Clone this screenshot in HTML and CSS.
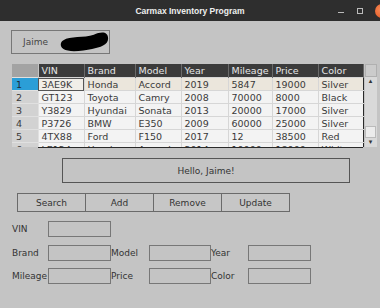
FILE: index.html
```html
<!DOCTYPE html>
<html lang="en">
<head>
<meta charset="UTF-8">
<title>Carmax Inventory Program</title>
<link rel="stylesheet" href="styles.css">
</head>
<body>
<div class="titlebar">
    <span></span>
    <span class="title">Carmax Inventory Program</span>
    <span class="winbtns">
        <span class="min"></span>
        <span class="max"></span>
        <span class="close"></span>
    </span>
</div>

<div class="namebox">
    <span>Jaime</span>
    <svg class="scribble" width="56" height="25" viewBox="0 0 56 25">
        <path d="M5 11 C12 6 28 9 39 5 C47 1 55 1 55 9 C55 17 46 19 37 21 C27 23 11 25 5 21 C1 18 1 13 5 11 Z" fill="#000"/>
    </svg>
</div>

<div class="gridwrap">
    <div class="tablebox">
        <table class="inv">
            <colgroup>
                <col style="width:26px"><col style="width:46px"><col style="width:51px"><col style="width:46px">
                <col style="width:47px"><col style="width:44px"><col style="width:46px"><col style="width:45px">
            </colgroup>
            <thead>
                <tr><th class="corner"></th><th>VIN</th><th>Brand</th><th>Model</th><th>Year</th><th>Mileage</th><th>Price</th><th>Color</th></tr>
            </thead>
            <tbody>
                <tr class="sel"><td class="rh">1</td><td class="focus">3AE9K</td><td>Honda</td><td>Accord</td><td>2019</td><td>5847</td><td>19000</td><td>Silver</td></tr>
                <tr><td class="rh">2</td><td>GT123</td><td>Toyota</td><td>Camry</td><td>2008</td><td>70000</td><td>8000</td><td>Black</td></tr>
                <tr><td class="rh">3</td><td>Y3829</td><td>Hyundai</td><td>Sonata</td><td>2013</td><td>20000</td><td>17000</td><td>Silver</td></tr>
                <tr><td class="rh">4</td><td>P3726</td><td>BMW</td><td>E350</td><td>2009</td><td>60000</td><td>25000</td><td>Silver</td></tr>
                <tr><td class="rh">5</td><td>4TX88</td><td>Ford</td><td>F150</td><td>2017</td><td>12</td><td>38500</td><td>Red</td></tr>
                <tr><td class="rh">6</td><td>LE124</td><td>Honda</td><td>Accord</td><td>2014</td><td>10000</td><td>18000</td><td>White</td></tr>
            </tbody>
        </table>
        <div class="scrollbar">
            <div class="sb-head"></div>
            <div class="sb-track">
                <span class="arrow">&#9652;</span>
                <span class="thumb"></span>
                <span class="arrow">&#9662;</span>
            </div>
        </div>
    </div>
    <div class="tableedge"></div>
</div>

<div class="hello">Hello, Jaime!</div>

<div class="buttons">
    <button>Search</button>
    <button>Add</button>
    <button>Remove</button>
    <button>Update</button>
</div>

<form class="fields">
    <label>VIN</label><input type="text">
    <span></span><span></span><span></span><span></span>
    <label>Brand</label><input type="text">
    <label>Model</label><input type="text">
    <label>Year</label><input type="text">
    <label>Mileage</label><input type="text">
    <label>Price</label><input type="text">
    <label>Color</label><input type="text">
</form>
</body>
</html>
```

FILE: styles.css
```css
body {
    margin: 0;
    width: 380px;
    height: 308px;
    overflow: hidden;
    background-color: #c4c4c4;
    font-family: "DejaVu Sans", sans-serif;
    color: #333;
}
.titlebar {
    height: 21px;
    background-color: #2e2e2e;
    display: grid;
    grid-template-columns: 1fr auto 1fr;
    align-items: center;
}
.title {
    color: #eee;
    font-family: "Liberation Sans", sans-serif;
    font-weight: bold;
    font-size: 8.5px;
}
.winbtns {
    justify-self: end;
    display: flex;
    align-items: center;
    margin-right: -9px;
}
.min {
    width: 6px;
    height: 1px;
    background-color: #bbb;
    margin-right: 13px;
    margin-top: 3px;
}
.max {
    width: 4px;
    height: 4px;
    border: 1px solid #bbb;
    margin-right: 12px;
}
.close {
    width: 14px;
    height: 14px;
    border-radius: 50%;
    background: radial-gradient(circle at 40% 40%, #f58a55, #e4501d);
}
.namebox {
    margin: 9px 0 0 11px;
    width: 97px;
    height: 22px;
    border: 1px solid #777;
    display: flex;
    align-items: center;
    font-size: 9px;
    color: #444;
}
.namebox span {
    margin-left: 11px;
}
.scribble {
    margin-left: 11px;
    margin-top: -2px;
}
.gridwrap {
    margin: 10px 0 0 12px;
}
.tablebox {
    display: flex;
    height: 83px;
    overflow: hidden;
}
.inv {
    border-collapse: collapse;
    table-layout: fixed;
    width: 351px;
    font-size: 9.5px;
}
.inv th, .inv td {
    height: 12px;
    padding: 0 0 0 3px;
    text-align: left;
    white-space: nowrap;
    overflow: hidden;
    font-weight: normal;
}
.inv th {
    background-color: #3b3b3b;
    color: #e6e6e6;
    border-right: 1px solid #6a6a6a;
    height: 13px;
}
.inv th.corner {
    background-color: #a3a3a3;
    border-right: 1px solid #c4c4c4;
}
.inv td {
    background-color: #f3f3f3;
    border: 1px solid #d6d6d6;
    color: #3a3a3a;
}
.inv td:nth-child(2) {
    border-left: 1px solid #2a2a2a;
}
.inv td:last-child {
    border-right: 1px solid #2a2a2a;
}
.inv td.rh {
    background-color: #d2d2d2;
    border: 1px solid #e0e0e0;
    border-left: none;
    padding-left: 4px;
}
.inv tr.sel td {
    background-color: #ebe6dc;
}
.inv tr.sel td.rh {
    background-color: #2b9ed7;
    color: #1a2a3a;
}
.inv tr.sel td.focus {
    background-color: #f1eee8;
    outline: 1px solid #555;
    outline-offset: -1px;
}
.scrollbar {
    width: 12px;
    margin-left: 1px;
    display: flex;
    flex-direction: column;
}
.sb-head {
    height: 13px;
    background-color: #cbcbcb;
    border: 1px solid #b0b0b0;
    box-sizing: border-box;
}
.sb-track {
    flex: 1;
    background-color: #d9d9d9;
    display: flex;
    flex-direction: column;
    align-items: center;
    font-size: 7px;
    color: #333;
}
.arrow {
    line-height: 9px;
}
.thumb {
    margin-top: auto;
    width: 9px;
    height: 10px;
    background-color: #ececec;
    border: 1px solid #bbb;
}
.tableedge {
    margin-left: 26px;
    width: 325px;
    height: 1px;
    background-color: #2a2a2a;
}
.hello {
    margin: 10px 0 0 62px;
    width: 286px;
    height: 23px;
    border: 1px solid #555;
    display: flex;
    align-items: center;
    justify-content: center;
    font-size: 9px;
    color: #333;
}
.buttons {
    margin: 10px 0 0 17px;
    display: flex;
}
.buttons button {
    width: 69px;
    height: 19px;
    margin-right: -1px;
    padding: 0;
    border: 1px solid #6a6a6a;
    background-color: #c6c6c6;
    font-family: "DejaVu Sans", sans-serif;
    font-size: 9px;
    color: #333;
}
.fields {
    margin: 9px 0 0 12px;
    display: grid;
    grid-template-columns: 36px 63px 38px 62px 37px 63px;
    grid-auto-rows: 16px;
    row-gap: 7.5px;
    align-items: center;
}
.fields label {
    font-size: 9px;
    color: #333;
}
.fields input {
    width: 100%;
    height: 16px;
    box-sizing: border-box;
    margin: 0;
    border: 1px solid #777;
    background-color: #c4c4c4;
}
```
